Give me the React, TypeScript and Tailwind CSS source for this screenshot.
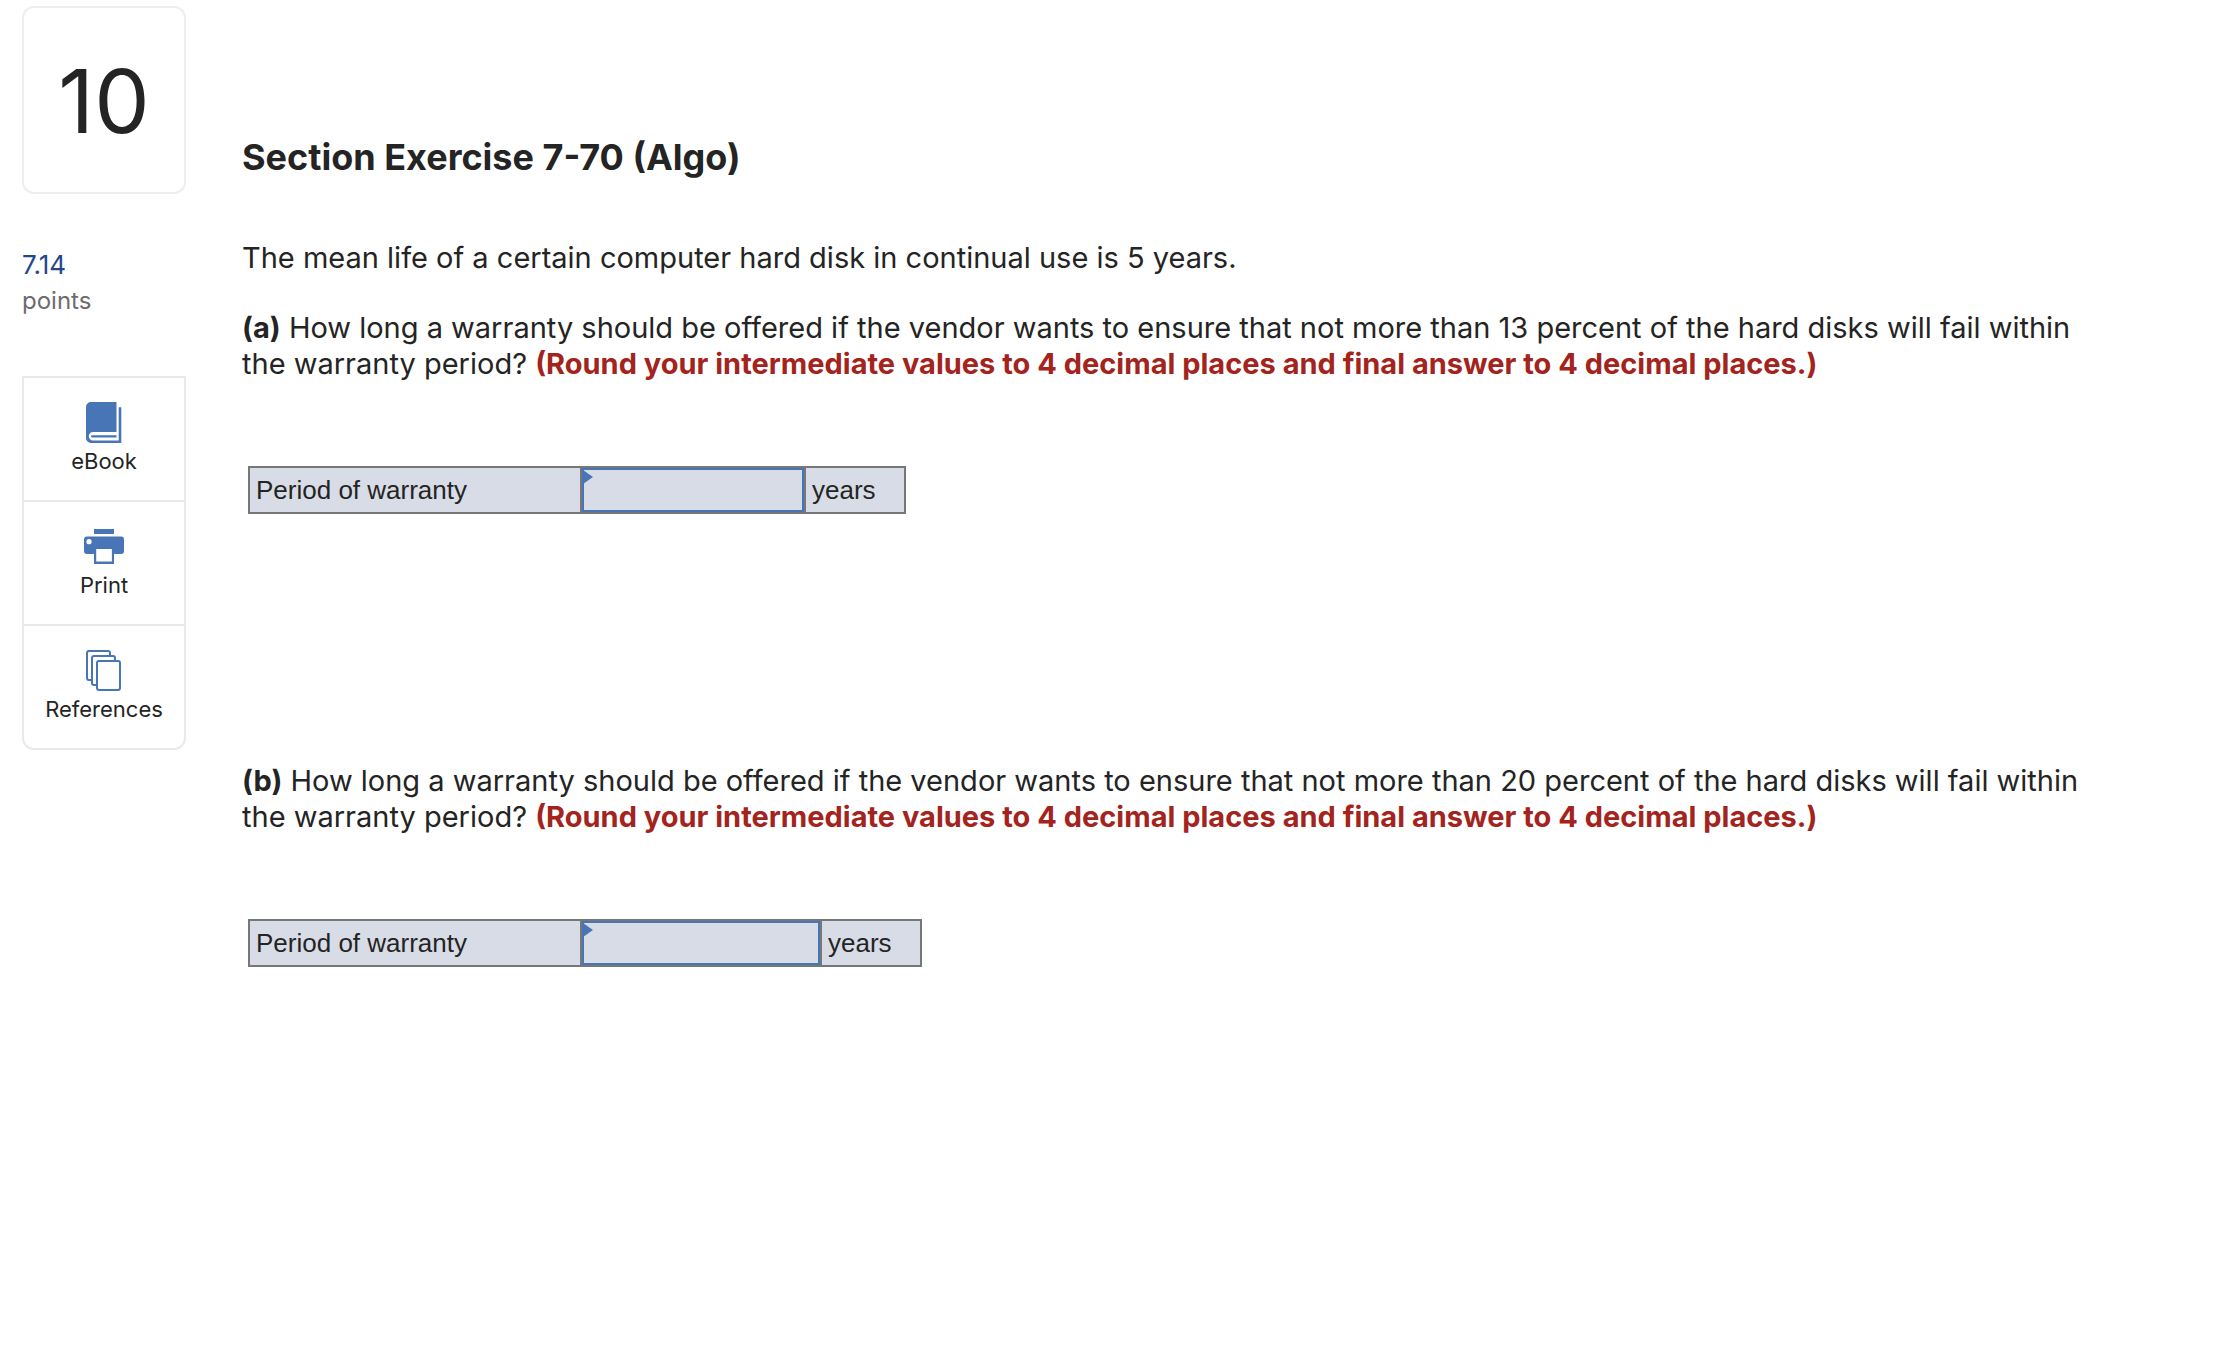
import type { ReactNode } from "react";

function BookIcon() {
  return (
    <svg width="36" height="42" viewBox="0 0 36 42" fill="#4775b5" aria-hidden="true">
      <path d="M5 0H30.500V30H7a4.250 4.250 0 0 0 0 8.500H32.700V5.300H35.300V41H5a5 5 0 0 1-5-5V5a5 5 0 0 1 5-5Z" />
      <path d="M6 33.200H30.500V35.400H6a1.100 1.100 0 0 1 0-2.200Z" />
    </svg>
  );
}

function PrintIcon() {
  return (
    <svg width="40" height="36" viewBox="0 0 40 36" aria-hidden="true">
      <path d="M10 0H30V5H10Z" fill="#4775b5" />
      <rect y="7.500" width="40" height="17.500" rx="3" fill="#4775b5" />
      <circle cx="5" cy="12.700" r="2.600" fill="#fff" />
      <path d="M10 20H30V35H10Z" fill="#4775b5" />
      <path d="M12.200 20H27.900V32.600H12.200Z" fill="#fff" />
    </svg>
  );
}

function ReferencesIcon() {
  return (
    <svg width="36" height="42" viewBox="0 0 36 42" fill="#fff" stroke="#4775b5" strokeWidth="2" aria-hidden="true">
      <rect x="1" y="1" width="23" height="29" rx="2" />
      <rect x="6" y="6" width="23" height="29" rx="2" />
      <rect x="11" y="11" width="23" height="29" rx="2" />
    </svg>
  );
}

function ToolButton({ label, children }: { label: string; children: ReactNode }) {
  return (
    <button
      type="button"
      className="flex h-[124px] w-full flex-col items-center border-b-2 border-[#e9e9e9] pt-[23px] last:h-[122px] last:border-b-0"
    >
      <span className="flex h-11 items-center justify-center">{children}</span>
      <span className="text-[22px] leading-8">{label}</span>
    </button>
  );
}

function Question({ id, percent, inputClass }: { id: string; percent: number; inputClass: string }) {
  return (
    <section className="mb-[249px]">
      <p>
        <b>({id})</b> How long a warranty should be offered if the vendor wants to ensure that not more than {percent}{" "}
        percent of the hard disks will fail within the warranty period?{" "}
        <b className="text-[#a3241d]">
          (Round your intermediate values to 4 decimal places and final answer to 4 decimal places.)
        </b>
      </p>

      <table className="mt-[84px] ml-[6px] border-collapse bg-[#d8dce6] font-['Liberation_Sans',Arial,sans-serif] text-[26px] leading-8">
        <tbody>
          <tr className="h-[46px]">
            <th scope="row" className="w-[332px] border-2 border-[#777] px-[6px] text-left font-normal">
              <label htmlFor={`warranty-${id}`}>Period of warranty</label>
            </th>
            <td className="relative border-2 border-[#777] p-0">
              <input
                id={`warranty-${id}`}
                type="text"
                className={`block h-11 border-2 border-[#4775b5] bg-transparent px-2 outline-none ${inputClass}`}
              />
              <svg className="absolute top-[2px] left-[1px]" width="10" height="14" viewBox="0 0 10 14" aria-hidden="true">
                <path d="M0 0L10 7L0 14Z" fill="#4775b5" />
              </svg>
            </td>
            <td className="w-[100px] border-2 border-[#777] px-[6px]">years</td>
          </tr>
        </tbody>
      </table>
    </section>
  );
}

export default function App() {
  return (
    <div className="flex min-h-screen items-start bg-white font-['Inter',sans-serif] text-[#242424]">
      <aside className="ml-[22px] w-[164px] shrink-0 pt-[6px]">
        <div className="flex h-[188px] items-center justify-center rounded-xl border-2 border-[#eee] pt-[2px] text-[88px] leading-none">
          10
        </div>

        <div className="mt-[53px] mb-[57px] leading-9">
          <div className="text-[26px] leading-9 text-[#24478a]">7.14</div>
          <div className="text-[24px] leading-9 text-[#6c6c6c]">points</div>
        </div>

        <div className="overflow-hidden rounded-b-xl border-2 border-[#e9e9e9]">
          <ToolButton label="eBook">
            <BookIcon />
          </ToolButton>
          <ToolButton label="Print">
            <PrintIcon />
          </ToolButton>
          <ToolButton label="References">
            <ReferencesIcon />
          </ToolButton>
        </div>
      </aside>

      <main className="ml-14 min-w-0 flex-1 pt-[133px] pr-28 text-[29px] leading-9">
        <h1 className="text-4xl leading-[48px] font-bold">Section Exercise 7-70 (Algo)</h1>
        <p className="mt-[59px] mb-[34px]">The mean life of a certain computer hard disk in continual use is 5 years.</p>
        <Question id="a" percent={13} inputClass="w-[222px]" />
        <Question id="b" percent={20} inputClass="w-[238px]" />
      </main>
    </div>
  );
}
